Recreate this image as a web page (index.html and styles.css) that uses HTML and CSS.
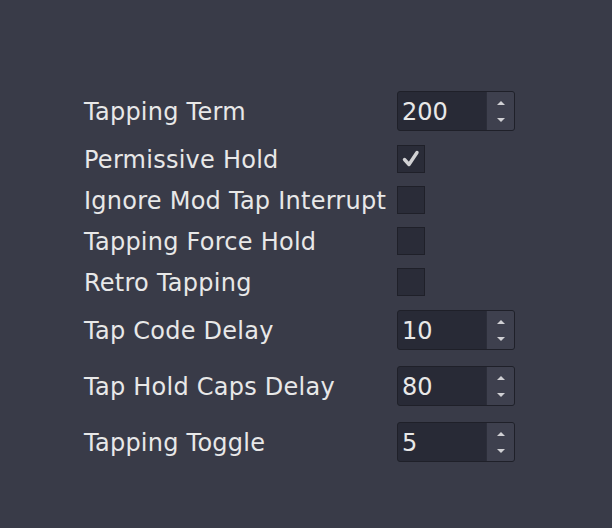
FILE: index.html
```html
<!DOCTYPE html>
<html lang="en">
<head>
    <meta charset="UTF-8">
    <title>Tapping Settings</title>
    <link rel="stylesheet" href="styles.css">
</head>
<body>
    <div class="settings">
        <div class="row spin-row">
            <span class="label">Tapping Term</span>
            <div class="spinbox"><span class="value">200</span><div class="arrows"><span class="up"></span><span class="down"></span></div></div>
        </div>
        <div class="row check-row first-check">
            <span class="label">Permissive Hold</span>
            <div class="checkbox checked">
                <svg width="20" height="20" viewBox="0 0 20 20"><path d="M3.5 10.5 L8 15.5 L16 3.5" fill="none" stroke="#d2d2d4" stroke-width="3.4" stroke-linecap="round" stroke-linejoin="round"/></svg>
            </div>
        </div>
        <div class="row check-row">
            <span class="label">Ignore Mod Tap Interrupt</span>
            <div class="checkbox"></div>
        </div>
        <div class="row check-row">
            <span class="label">Tapping Force Hold</span>
            <div class="checkbox"></div>
        </div>
        <div class="row check-row">
            <span class="label">Retro Tapping</span>
            <div class="checkbox"></div>
        </div>
        <div class="row spin-row after-check">
            <span class="label">Tap Code Delay</span>
            <div class="spinbox"><span class="value">10</span><div class="arrows"><span class="up"></span><span class="down"></span></div></div>
        </div>
        <div class="row spin-row">
            <span class="label">Tap Hold Caps Delay</span>
            <div class="spinbox"><span class="value">80</span><div class="arrows"><span class="up"></span><span class="down"></span></div></div>
        </div>
        <div class="row spin-row">
            <span class="label">Tapping Toggle</span>
            <div class="spinbox"><span class="value">5</span><div class="arrows"><span class="up"></span><span class="down"></span></div></div>
        </div>
    </div>
</body>
</html>
```

FILE: styles.css
```css
body {
    margin: 0;
    height: 528px;
    background-color: #393b48;
    font-family: "DejaVu Sans", sans-serif;
    color: #e8e8e8;
}
.settings {
    padding: 91px 0 0 84px;
}
.row {
    display: flex;
    align-items: center;
}
.label {
    width: 313px;
    font-size: 24px;
    letter-spacing: 0.25px;
    padding-top: 2px;
    white-space: nowrap;
}
.spin-row {
    height: 40px;
    margin-top: 16px;
}
.spin-row:first-child {
    margin-top: 0;
}
.check-row {
    height: 28px;
    margin-top: 13px;
}
.first-check,
.after-check {
    margin-top: 14px;
}
.spinbox {
    display: flex;
    width: 118px;
    height: 40px;
    box-sizing: border-box;
    border: 1px solid #1f2029;
    border-radius: 3px;
    background-color: #282a36;
    overflow: hidden;
}
.value {
    flex: 1;
    font-size: 24px;
    line-height: 40px;
    padding-left: 4px;
}
.arrows {
    width: 28px;
    display: flex;
    flex-direction: column;
    justify-content: space-between;
    align-items: center;
    padding: 9px 0 8px;
    box-sizing: border-box;
    background-color: #3e404e;
    border-left: 1px solid #2c2e3a;
}
.up, .down {
    width: 0;
    height: 0;
    border-left: 4px solid transparent;
    border-right: 4px solid transparent;
}
.up {
    border-bottom: 4px solid #d0d0d4;
}
.down {
    border-top: 4px solid #d0d0d4;
}
.checkbox {
    width: 28px;
    height: 28px;
    box-sizing: border-box;
    border: 1px solid #1f2029;
    background-color: #2a2c38;
    display: flex;
    align-items: center;
    justify-content: center;
}
```
